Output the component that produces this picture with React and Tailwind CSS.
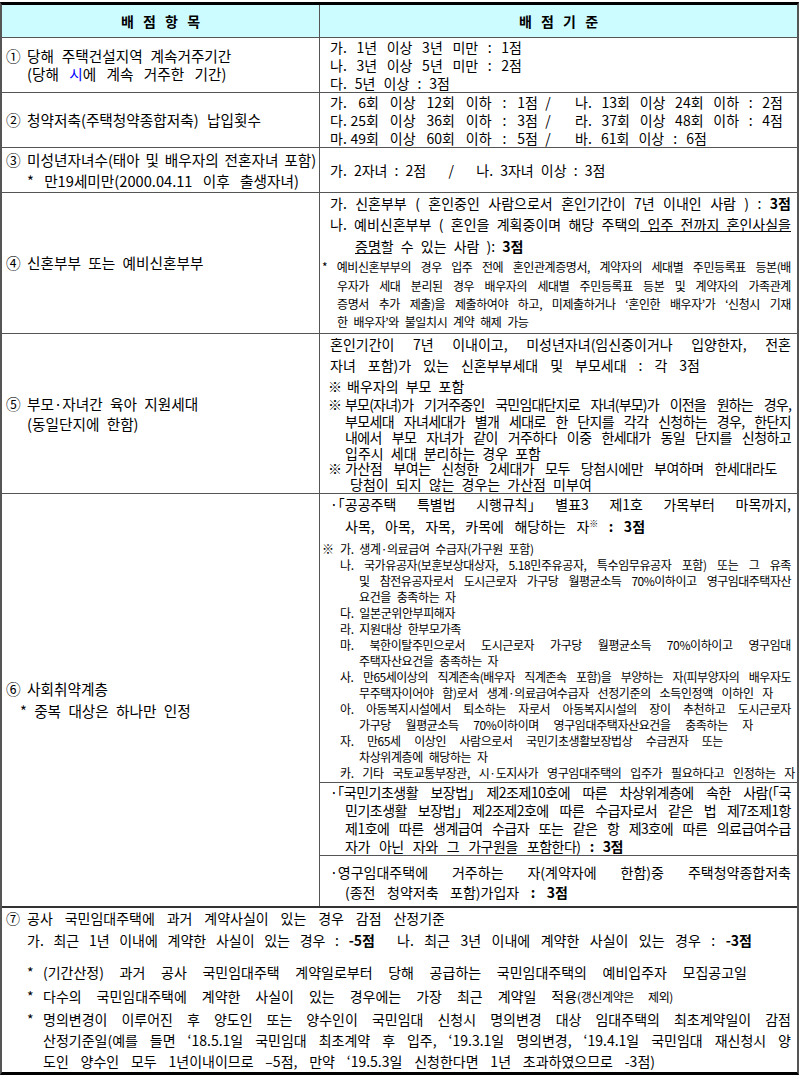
const J = 'text-justify [text-justify:inter-word] [text-align-last:justify]';
const NW = 'whitespace-nowrap [word-spacing:4px]';
const SNW = 'whitespace-nowrap [word-spacing:3.5px]';

function Num({ children }) {
  return <span className="inline-block w-[21px]">{children}</span>;
}

// keeps a bracketed word together so justification does not open gaps inside it
function K({ children }) {
  return <span className="inline-block whitespace-nowrap">{children}</span>;
}

function Header() {
  return (
    <div className="flex h-[33px] border-b border-[#555] bg-[#ccfcff] text-[14px] font-bold [word-spacing:6px]">
      <div className="w-[318px] border-r border-[#555] flex items-center justify-center">배 점 항 목</div>
      <div className="flex-1 flex items-center justify-center">배 점 기 준</div>
    </div>
  );
}

function Left({ children }) {
  return (
    <div className="w-[318px] shrink-0 border-r border-[#555] flex flex-col justify-center pl-[4px] text-[14.67px]">
      {children}
    </div>
  );
}

function Row1() {
  return (
    <div className="flex h-[55px] border-b border-[#555]">
      <Left>
        <div className="whitespace-nowrap leading-[18px] [word-spacing:4.5px]"><Num>①</Num>당해 주택건설지역 계속거주기간</div>
        <div className="whitespace-nowrap leading-[18px] pl-[21px] [word-spacing:7px]">(당해 <span className="text-[#0000ff]">시</span>에 계속 거주한 기간)</div>
      </Left>
      <div className="flex-1 text-[14px]">
        <div className={`h-[18px] leading-[18px] pl-[10px] pr-[275px] ${J}`}>가. 1년 이상 3년 미만 : 1점</div>
        <div className={`h-[18px] leading-[18px] pl-[10px] pr-[275px] ${J}`}>나. 3년 이상 5년 미만 : 2점</div>
        <div className={`h-[18px] leading-[18px] pl-[10px] pr-[347px] ${J}`}>다. 5년 이상 : 3점</div>
      </div>
    </div>
  );
}

function Row2Line({ a, n, b, c, w }) {
  return (
    <div className="flex h-[18px] leading-[18px] pl-[10px] whitespace-nowrap">
      <span className="w-[20px]">{a}</span>
      <span className="w-[16px] text-right">{n}</span>
      <span className={`w-[172px] ${J}`}>{b}</span>
      <span className="w-[20px] text-center">/</span>
      <span className={`ml-[17px] ${w} ${J}`}>{c}</span>
    </div>
  );
}

function Row2() {
  return (
    <div className="flex h-[55px] border-b border-[#555]">
      <Left>
        <div className="whitespace-nowrap leading-[18px] [word-spacing:5px]"><Num>②</Num>청약저축(주택청약종합저축) 납입횟수</div>
      </Left>
      <div className="flex-1 text-[14px]">
        <Row2Line a="가." n="6" b="회 이상 12회 이하 : 1점" c="나. 13회 이상 24회 이하 : 2점" w="w-[208px]" />
        <Row2Line a="다." n="25" b="회 이상 36회 이하 : 3점" c="라. 37회 이상 48회 이하 : 4점" w="w-[208px]" />
        <Row2Line a="마." n="49" b="회 이상 60회 이하 : 5점" c="바. 61회 이상 : 6점" w="w-[132px]" />
      </div>
    </div>
  );
}

function Row3() {
  return (
    <div className="flex h-[45px] border-b border-[#555]">
      <Left>
        <div className="whitespace-nowrap leading-[21px] [word-spacing:2.5px]"><Num>③</Num>미성년자녀수(태아 및 배우자의 전혼자녀 포함)</div>
        <div className="whitespace-nowrap leading-[21px] pl-[21px] [word-spacing:7px]">* 만19세미만(2000.04.11 이후 출생자녀)</div>
      </Left>
      <div className={`flex-1 text-[14px] flex items-center pl-[10px] ${NW}`}>
        <span>가. 2자녀 : 2점</span>
        <span className="w-[50px] text-center">/</span>
        <span>나. 3자녀 이상 : 3점</span>
      </div>
    </div>
  );
}

function Row4() {
  return (
    <div className="flex h-[141px] border-b border-[#555]">
      <Left>
        <div className="whitespace-nowrap leading-[20px] [word-spacing:4px]"><Num>④</Num>신혼부부 또는 예비신혼부부</div>
      </Left>
      <div className="flex-1 text-[14px]">
        <div className={`h-[20px] leading-[20px] pl-[10px] pr-[6px] ${J}`}>가. 신혼부부 ( 혼인중인 사람으로서 혼인기간이 7년 이내인 사람 ) : <b>3점</b></div>
        <div className={`h-[23px] leading-[23px] pl-[10px] pr-[6px] ${J}`}>나. 예비신혼부부 ( 혼인을 계획중이며 해당 주택의<u> 입주 전까지 혼인사실을</u></div>
        <div className={`h-[21px] leading-[21px] pl-[35px] ${NW}`}><u>증명</u>할 수 있는 사람 ): <b>3점</b></div>
        <div className="text-[12px] tracking-[-0.4px]">
          <div className={`h-[20px] leading-[20px] pl-[2px] pr-[6px] ${J}`}>* 예비신혼부부의 경우 입주 전에 혼인관계증명서, 계약자의 세대별 주민등록표 등본(배</div>
          <div className={`h-[18px] leading-[18px] pl-[17px] pr-[6px] ${J}`}>우자가 세대 분리된 경우 배우자의 세대별 주민등록표 등본 및 계약자의 가족관계</div>
          <div className={`h-[18px] leading-[18px] pl-[17px] pr-[6px] ${J}`}>증명서 추가 제출)을 제출하여야 하고, 미제출하거나 ‘혼인한 배우자’가 ‘신청시 기재</div>
          <div className={`h-[18px] leading-[18px] pl-[17px] ${SNW}`}>한 배우자’와 불일치시 계약 해제 가능</div>
        </div>
      </div>
    </div>
  );
}

function Row5() {
  return (
    <div className="flex h-[160px] border-b border-[#555]">
      <Left>
        <div className="whitespace-nowrap leading-[20px] [word-spacing:4px]"><Num>⑤</Num>부모·자녀간 육아 지원세대</div>
        <div className="whitespace-nowrap leading-[20px] pl-[21px] [word-spacing:4px]">(동일단지에 한함)</div>
      </Left>
      <div className="flex-1 text-[14px]">
        <div className={`h-[20px] leading-[20px] pl-[10px] pr-[6px] ${J}`}>혼인기간이 7년 이내이고, 미성년자녀(임신중이거나 입양한자, 전혼</div>
        <div className={`h-[22px] leading-[22px] pl-[10px] pr-[97px] ${J}`}>자녀 포함)가 있는 신혼부부세대 및 부모세대 : 각 3점</div>
        <div className={`flex h-[20px] leading-[20px] pl-[8px] ${NW}`}><span className="w-[19px]">※</span>배우자의 부모 포함</div>
        <div className="flex h-[17px] leading-[17px] pl-[8px] pr-[6px]">
          <span className="w-[17px] shrink-0">※</span>
          <span className={`flex-1 tracking-[-0.8px] ${J}`}>부모(자녀)가 기거주중인 국민임대단지로 자녀(부모)가 이전을 원하는 경우,</span>
        </div>
        <div className={`h-[16px] leading-[16px] pl-[25px] pr-[6px] tracking-[-0.6px] ${J}`}>부모세대 자녀세대가 별개 세대로 한 단지를 각각 신청하는 경우, 한단지</div>
        <div className={`h-[16px] leading-[16px] pl-[25px] pr-[6px] tracking-[-0.6px] ${J}`}>내에서 부모 자녀가 같이 거주하다 이중 한세대가 동일 단지를 신청하고</div>
        <div className={`h-[16px] leading-[16px] pl-[25px] ${NW}`}>입주시 세대 분리하는 경우 포함</div>
        <div className="flex h-[15px] leading-[15px] pl-[8px] pr-[20px]">
          <span className="w-[17px] shrink-0">※</span>
          <span className={`flex-1 tracking-[-0.4px] ${J}`}>가산점 부여는 신청한 2세대가 모두 당첨시에만 부여하며 한세대라도</span>
        </div>
        <div className={`h-[16px] leading-[16px] pl-[30px] ${NW}`}>당첨이 되지 않는 경우는 가산점 미부여</div>
      </div>
    </div>
  );
}

const SL = 'h-[16px] leading-[16px]';

function Row6() {
  return (
    <div className="flex h-[414px] border-b-2 border-[#333]">
      <Left>
        <div className="whitespace-nowrap leading-[22px] [word-spacing:4px]"><Num>⑥</Num>사회취약계층</div>
        <div className="whitespace-nowrap leading-[22px] pl-[14px] [word-spacing:4px]">* 중복 대상은 하나만 인정</div>
      </Left>
      <div className="flex-1 flex flex-col text-[14px]">
        <div className="h-[289px] border-b border-[#555]">
          <div className={`h-[20px] leading-[20px] pl-[10px] pr-[6px] ${J}`}><K>·｢공공주택</K> 특별법 <K>시행규칙｣</K> 별표3 제1호 가목부터 마목까지,</div>
          <div className={`h-[25px] leading-[25px] pl-[25px] pr-[152px] ${J}`}>
            사목, 아목, 자목, 카목에 해당하는 <K>자<span className="relative -top-[5px] text-[9px]">※</span></K> <b>: 3점</b>
          </div>
          <div className="mt-[2px] text-[12px] tracking-[-0.4px]">
            <div className={`flex ${SL} pl-[2px] ${SNW}`}><span className="w-[18px]">※</span>가. 생계·의료급여 수급자(가구원 포함)</div>
            <div className={`${SL} pl-[20px] pr-[6px] ${J}`}>나. 국가유공자(보훈보상대상자, 5.18민주유공자, 특수임무유공자 포함) 또는 그 유족</div>
            <div className={`${SL} pl-[39px] pr-[6px] tracking-[-0.5px] ${J}`}>및 참전유공자로서 도시근로자 가구당 월평균소득 70%이하이고 영구임대주택자산</div>
            <div className={`${SL} pl-[39px] ${SNW}`}>요건을 충족하는 자</div>
            <div className={`${SL} pl-[20px] ${SNW}`}>다. 일본군위안부피해자</div>
            <div className={`${SL} pl-[20px] ${SNW}`}>라. 지원대상 한부모가족</div>
            <div className={`${SL} pl-[20px] pr-[6px] ${J}`}>마. 북한이탈주민으로서 도시근로자 가구당 월평균소득 70%이하이고 영구임대</div>
            <div className={`${SL} pl-[39px] ${SNW}`}>주택자산요건을 충족하는 자</div>
            <div className={`${SL} pl-[20px] pr-[6px] tracking-[-0.5px] ${J}`}>사. 만65세이상의 직계존속(배우자 직계존속 포함)을 부양하는 자(피부양자의 배우자도</div>
            <div className={`${SL} pl-[39px] pr-[24px] ${J}`}>무주택자이어야 함)로서 생계·의료급여수급자 선정기준의 소득인정액 이하인 자</div>
            <div className={`${SL} pl-[20px] pr-[6px] ${J}`}>아. 아동복지시설에서 퇴소하는 자로서 아동복지시설의 장이 추천하고 도시근로자</div>
            <div className={`${SL} pl-[39px] pr-[44px] ${J}`}>가구당 월평균소득 70%이하이며 영구임대주택자산요건을 충족하는 자</div>
            <div className={`${SL} pl-[20px] pr-[74px] ${J}`}>자. 만65세 이상인 사람으로서 국민기초생활보장법상 수급권자 또는</div>
            <div className={`${SL} pl-[39px] ${SNW}`}>차상위계층에 해당하는 자</div>
            <div className={`${SL} pl-[20px] pr-[2px] ${J}`}>카. 기타 국토교통부장관, 시·도지사가 영구임대주택의 입주가 필요하다고 인정하는 자</div>
          </div>
        </div>
        <div className="h-[73px] border-b border-[#555] tracking-[-0.5px]">
          <div className={`h-[18px] leading-[18px] pl-[10px] pr-[6px] ${J}`}><K>·｢국민기초생활</K> <K>보장법｣</K> 제2조제10호에 따른 차상위계층에 속한 <K>사람(｢국</K></div>
          <div className={`h-[18px] leading-[18px] pl-[25px] pr-[6px] ${J}`}>민기초생활 <K>보장법｣</K> 제2조제2호에 따른 수급자로서 같은 법 제7조제1항</div>
          <div className={`h-[18px] leading-[18px] pl-[25px] pr-[6px] ${J}`}>제1호에 따른 생계급여 수급자 또는 같은 항 제3호에 따른 의료급여수급</div>
          <div className={`h-[18px] leading-[18px] pl-[25px] pr-[174px] ${J}`}>자가 아닌 자와 그 가구원을 포함한다) <b>: 3점</b></div>
        </div>
        <div className="flex-1 pt-[6px]">
          <div className={`h-[20px] leading-[20px] pl-[10px] pr-[6px] ${J}`}>·영구임대주택에 거주하는 자(계약자에 한함)중 주택청약종합저축</div>
          <div className={`h-[20px] leading-[20px] pl-[25px] pr-[229px] ${J}`}>(종전 청약저축 포함)가입자 <b>: 3점</b></div>
        </div>
      </div>
    </div>
  );
}

function Star({ children, pr, h }) {
  return (
    <div className={`flex pl-[21px] ${h}`}>
      <span className="w-[16px] shrink-0">*</span>
      <div className={`flex-1 ${pr} ${J}`}>{children}</div>
    </div>
  );
}

function Row7() {
  return (
    <div className="h-[164px] pl-[4px] text-[14px]">
      <div className={`h-[20px] leading-[20px] pr-[352px] ${J}`}><Num>⑦</Num>공사 국민임대주택에 과거 계약사실이 있는 경우 감점 산정기준</div>
      <div className="flex h-[24px] leading-[24px] pl-[21px] whitespace-nowrap">
        <span className={`w-[348px] ${J}`}>가. 최근 1년 이내에 계약한 사실이 있는 경우 : <b>-5점</b></span>
        <span className={`ml-[22px] w-[355px] ${J}`}>나. 최근 3년 이내에 계약한 사실이 있는 경우 : <b>-3점</b></span>
      </div>
      <div className="h-[8px]" />
      <Star h="h-[24px] leading-[24px]" pr="pr-[50px]">(기간산정) 과거 공사 국민임대주택 계약일로부터 당해 공급하는 국민임대주택의 예비입주자 모집공고일</Star>
      <Star h="h-[24px] leading-[24px]" pr="pr-[124px]">
        다수의 국민임대주택에 계약한 사실이 있는 경우에는 가장 최근 계약일 적용<span className="text-[12px] tracking-[-0.4px]">(갱신계약은 제외)</span>
      </Star>
      <Star h="h-[22px] leading-[22px]" pr="pr-[6px]">명의변경이 이루어진 후 양도인 또는 양수인이 국민임대 신청시 명의변경 대상 임대주택의 최초계약일이 감점</Star>
      <div className={`h-[21px] leading-[21px] pl-[37px] pr-[6px] ${J}`}>산정기준일(예를 들면 ‘18.5.1일 국민임대 최초계약 후 입주, ‘19.3.1일 명의변경, ‘19.4.1일 국민임대 재신청시 양</div>
      <div className={`h-[20px] leading-[20px] pl-[37px] pr-[142px] ${J}`}>도인 양수인 모두 1년이내이므로 –5점, 만약 ‘19.5.3일 신청한다면 1년 초과하였으므로 -3점)</div>
    </div>
  );
}

export default function App() {
  return (
    <div className="w-[800px] h-[1078px] bg-white pt-[2px] text-black font-['Noto_Sans_CJK_KR','Noto_Sans',sans-serif]">
      <div className="w-[799px] border-y-[3px] border-y-black border-x-2 border-x-[#555]">
        <Header />
        <Row1 />
        <Row2 />
        <Row3 />
        <Row4 />
        <Row5 />
        <Row6 />
        <Row7 />
      </div>
    </div>
  );
}
